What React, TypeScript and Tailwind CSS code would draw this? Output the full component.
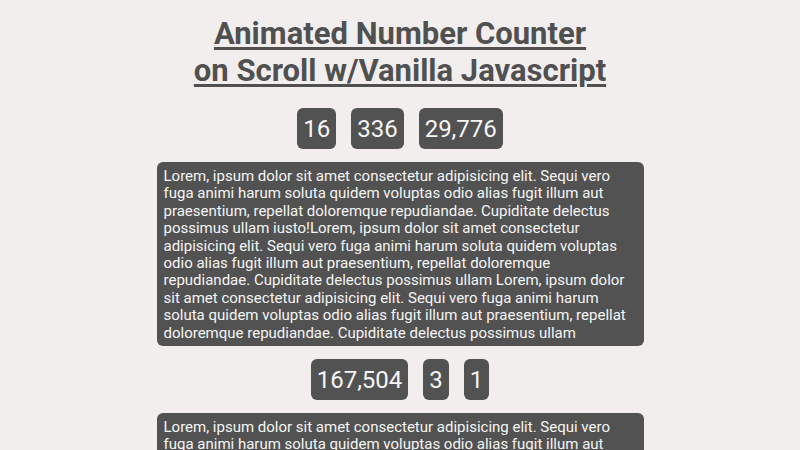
const lorem =
  'Lorem, ipsum dolor sit amet consectetur adipisicing elit. Sequi vero fuga animi harum soluta quidem voluptas odio alias fugit illum aut praesentium, repellat doloremque repudiandae. Cupiditate delectus possimus ullam iusto!Lorem, ipsum dolor sit amet consectetur adipisicing elit. Sequi vero fuga animi harum soluta quidem voluptas odio alias fugit illum aut praesentium, repellat doloremque repudiandae. Cupiditate delectus possimus ullam Lorem, ipsum dolor sit amet consectetur adipisicing elit. Sequi vero fuga animi harum soluta quidem voluptas odio alias fugit illum aut praesentium, repellat doloremque repudiandae. Cupiditate delectus possimus ullam';

const Counters = ({ values }: { values: string[] }) => (
  <div className="flex justify-center gap-[15px]">
    {values.map((v, i) => (
      <span
        key={i}
        className="h-[41px] px-[6px] flex items-center rounded-[6px] bg-[#525252] text-[#f5f5f5] text-[24px]"
      >
        {v}
      </span>
    ))}
  </div>
);

const Block = () => (
  <p className="w-[487px] mx-auto px-[7px] pt-[6px] pb-[4px] rounded-[6px] bg-[#525252] text-[#f5f5f5] text-[15px] leading-[17.4px]">
    {lorem}
  </p>
);

export default function App() {
  return (
    <div className="min-h-[450px] bg-[#f2eeed] pt-[15px] pb-10 font-['Roboto',sans-serif]">
      <h1 className="text-center text-[31px] leading-[37px] font-bold text-[#505050] underline underline-offset-[3px] decoration-[3px]">
        Animated Number Counter
        <br />
        on Scroll w/Vanilla Javascript
      </h1>

      <div className="mt-[19px] flex flex-col gap-[13px]">
        <Counters values={['16', '336', '29,776']} />
        <Block />
        <Counters values={['167,504', '3', '1']} />
        <Block />
      </div>
    </div>
  );
}
